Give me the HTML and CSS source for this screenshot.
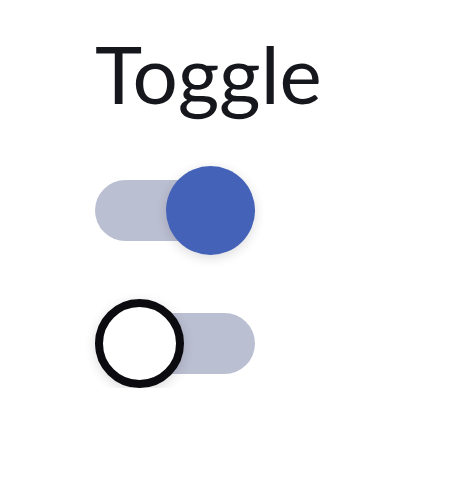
FILE: index.html
```html
<!DOCTYPE html>
<html lang="en">

<head>
    <meta charset="UTF-8" />
    <meta name="viewport" content="width=device-width, initial-scale=1" />
    <title>Toggle</title>
    <link rel="stylesheet" href="styles.css">
</head>

<body>
    <div class="page">
        <h1 class="title">Toggle</h1>

        <div class="toggles">
            <div class="switch on">
                <div class="track"></div>
                <div class="knob"></div>
            </div>
            <div class="switch off">
                <div class="track"></div>
                <div class="knob"></div>
            </div>
        </div>
    </div>
</body>

</html>
```

FILE: styles.css
```css
body {
    margin: 0;
    background: #fff;
    font-family: Lato, "Liberation Sans", sans-serif;
}

.page {
    padding: 25px 0 0 95px;
}

.title {
    margin: 0;
    font-size: 80px;
    font-weight: 400;
    line-height: 1.2;
    color: #16161d;
}

.toggles {
    display: flex;
    flex-direction: column;
    gap: 44px;
    margin-top: 45px;
}

.switch {
    position: relative;
    width: 160px;
    height: 89px;
    display: flex;
    align-items: center;
}

.track {
    width: 100%;
    height: 61px;
    border-radius: 31px;
    background: #bbbfd2;
}

.knob {
    position: absolute;
    top: 0;
    width: 89px;
    height: 89px;
    box-sizing: border-box;
    border-radius: 50%;
    box-shadow: 0 3px 12px rgba(0, 0, 0, 0.14);
}

.switch.on .knob {
    right: 0;
    background: #4562b9;
}

.switch.off .knob {
    left: 0;
    background: #fff;
    border: 8px solid #0b0b10;
}
```
